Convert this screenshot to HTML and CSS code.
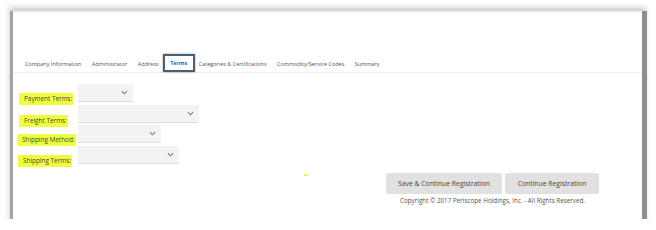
FILE: index.html
```html
<!DOCTYPE html>
<html lang="en">
<head>
<meta charset="UTF-8">
<title>Registration - Terms</title>
<link rel="stylesheet" href="styles.css">
</head>
<body>
    <div class="frame">
        <div class="topbar"></div>
        <div class="tabs">
            <span class="tab">Company Information</span>
            <span class="tab">Administrator</span>
            <span class="tab">Address</span>
            <span class="tab active">Terms</span>
            <span class="tab">Categories &amp; Certifications</span>
            <span class="tab">Commodity/Service Codes</span>
            <span class="tab">Summary</span>
        </div>

        <form class="terms-form">
            <div class="form-row">
                <div class="label-cell"><label class="hl" for="payment">Payment Terms:</label></div>
                <div class="select w55" id="payment"><svg viewBox="0 0 8 5"><path d="M1 1l3 3 3-3"/></svg></div>
            </div>
            <div class="form-row">
                <div class="label-cell"><label class="hl low" for="freight">Freight Terms:</label></div>
                <div class="select w121" id="freight"><svg viewBox="0 0 8 5"><path d="M1 1l3 3 3-3"/></svg></div>
            </div>
            <div class="form-row">
                <div class="label-cell wide"><label class="hl high" for="method">Shipping Method:</label></div>
                <div class="select w83" id="method"><svg viewBox="0 0 8 5"><path d="M1 1l3 3 3-3"/></svg></div>
            </div>
            <div class="form-row">
                <div class="label-cell mid"><label class="hl high" for="shipping">Shipping Terms:</label></div>
                <div class="select w101" id="shipping"><svg viewBox="0 0 8 5"><path d="M1 1l3 3 3-3"/></svg></div>
            </div>
        </form>

        <div class="footer">
            <span class="mark"></span>
            <div class="actions">
                <div class="buttons">
                    <button type="button" class="btn save">Save &amp; Continue Registration</button>
                    <button type="button" class="btn cont">Continue Registration</button>
                </div>
                <p class="copyright">Copyright &copy; 2017 Periscope Holdings, Inc. - All Rights Reserved.</p>
            </div>
        </div>
    </div>
</body>
</html>
```

FILE: styles.css
```css
body {
    margin: 0;
    background: #fff;
    font-family: "Open Sans", "Liberation Sans", sans-serif;
    color: #444;
}
.frame {
    margin: 11px 14px 0 13px;
    width: 629px;
    height: 208px;
    background: #fff;
    box-shadow: -3px 0 0 #a4a4a4, 5px 0 0 #8e8e8e, 0 2px 0 #b3b3b3, 0 0 5px 4px rgba(0, 0, 0, 0.18);
}
.topbar {
    height: 2px;
    background: #f1f1f1;
}

/* tab strip */
.tabs {
    display: flex;
    align-items: center;
    padding: 42px 0 0 12px;
    height: 17px;
    border-bottom: 1px solid #eee;
    font-size: 5.5px;
    color: #555;
}
.tab {
    margin-right: 10.5px;
    white-space: nowrap;
}
.tab.active {
    margin: 0 4px 1px -6.5px;
    padding: 3px 5.5px;
    border: 2px solid #4a5f78;
    box-shadow: 0 0 2px rgba(0, 0, 0, 0.4);
    color: #2768ad;
    font-weight: bold;
}

/* terms form */
.terms-form {
    padding-top: 11px;
}
.form-row {
    display: flex;
    align-items: flex-start;
    height: 20.5px;
}
.label-cell {
    box-sizing: border-box;
    width: 65px;
    padding-left: 6px;
}
.label-cell.wide {
    padding-left: 4px;
}
.label-cell.mid {
    padding-left: 5px;
}
.hl {
    display: inline-block;
    margin-top: 9px;
    padding: 0 1px 0 5px;
    height: 12px;
    line-height: 12px;
    background: #f0ff3c;
    font-size: 6.4px;
    color: #444;
    white-space: nowrap;
}
.hl.low {
    margin-top: 10px;
}
.hl.high {
    margin-top: 8px;
}
.select {
    box-sizing: border-box;
    height: 18px;
    background: #f3f3f3;
    border-bottom: 1px solid #ddd;
    display: flex;
    align-items: center;
    justify-content: flex-end;
    padding-right: 5px;
}
.select svg {
    width: 7px;
    height: 5px;
    fill: none;
    stroke: #6a7c8c;
    stroke-width: 1.2;
}
.w55 { width: 55px; }
.w121 { width: 121px; }
.w83 { width: 83px; }
.w101 { width: 101px; }

/* footer */
.footer {
    display: flex;
    padding: 7px 43px 0 291px;
}
.mark {
    width: 4px;
    height: 2px;
    margin-top: 1px;
    background: #eaff3a;
}
.actions {
    margin-left: auto;
    text-align: center;
}
.buttons {
    display: flex;
    gap: 3px;
}
.btn {
    height: 21px;
    border: none;
    border-radius: 2px;
    background: #e1e1e1;
    font-family: inherit;
    font-size: 6.8px;
    color: #444;
    padding: 0;
}
.save { width: 116px; }
.cont { width: 94px; }
.copyright {
    margin: 2px 0 0;
    font-size: 6.3px;
    color: #555;
}
```
